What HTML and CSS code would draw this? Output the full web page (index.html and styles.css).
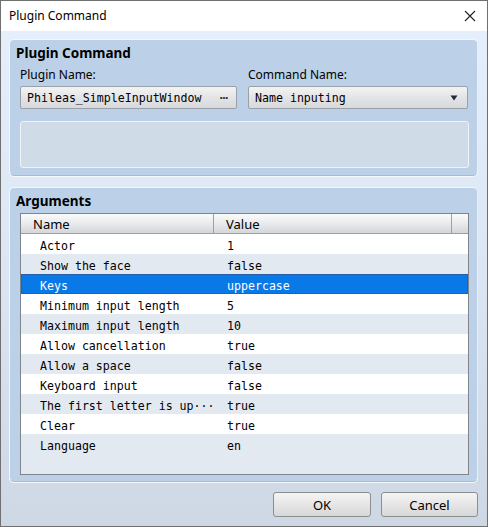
FILE: index.html
```html
<!DOCTYPE html>
<html lang="en">
<head>
<meta charset="utf-8">
<title>Plugin Command</title>
<link rel="stylesheet" href="styles.css">
</head>
<body>
<div class="window">
  <div class="titlebar">
    <span class="title">Plugin Command</span>
    <svg class="close" width="12" height="12" viewBox="0 0 12 12" aria-hidden="true">
      <path d="M1 1 L11 11 M11 1 L1 11" stroke="#222" stroke-width="1.1" fill="none"/>
    </svg>
  </div>
  <div class="body">
    <section class="group group-command">
      <h2 class="group-title">Plugin Command</h2>
      <div class="fields">
        <div class="field">
          <label class="label">Plugin Name:</label>
          <div class="control">
            <span class="mono">Phileas_SimpleInputWindow</span>
            <span class="dots">···</span>
          </div>
        </div>
        <div class="field">
          <label class="label">Command Name:</label>
          <div class="control">
            <span class="mono">Name inputing</span>
            <svg class="arrow" width="8" height="6" viewBox="0 0 8 6" aria-hidden="true">
              <path d="M0.5 0.5 H7.5 L4 5.5 Z" fill="#1f2a3a"/>
            </svg>
          </div>
        </div>
      </div>
      <div class="note"></div>
    </section>

    <section class="group group-args">
      <h2 class="group-title">Arguments</h2>
      <div class="table">
        <div class="thead">
          <div class="th th-name">Name</div>
          <div class="th th-value">Value</div>
          <div class="th th-pad"></div>
        </div>
        <div class="tbody">
          <div class="row"><span class="c-name">Actor</span><span class="c-value">1</span></div>
          <div class="row alt"><span class="c-name">Show the face</span><span class="c-value">false</span></div>
          <div class="row selected"><span class="c-name">Keys</span><span class="c-value">uppercase</span></div>
          <div class="row"><span class="c-name">Minimum input length</span><span class="c-value">5</span></div>
          <div class="row alt"><span class="c-name">Maximum input length</span><span class="c-value">10</span></div>
          <div class="row"><span class="c-name">Allow cancellation</span><span class="c-value">true</span></div>
          <div class="row alt"><span class="c-name">Allow a space</span><span class="c-value">false</span></div>
          <div class="row"><span class="c-name">Keyboard input</span><span class="c-value">false</span></div>
          <div class="row alt"><span class="c-name">The first letter is up···</span><span class="c-value">true</span></div>
          <div class="row"><span class="c-name">Clear</span><span class="c-value">true</span></div>
          <div class="row alt"><span class="c-name">Language</span><span class="c-value">en</span></div>
        </div>
      </div>
    </section>

    <div class="footer">
      <button class="btn btn-ok">OK</button>
      <button class="btn btn-cancel">Cancel</button>
    </div>
  </div>
</div>
</body>
</html>
```
FILE: styles.css
```css
html, body {
  margin: 0;
  padding: 0;
}

body {
  width: 488px;
  height: 527px;
  font-family: "Noto Sans", "Open Sans", sans-serif;
  color: #000;
  background: #fff;
}

.window {
  box-sizing: border-box;
  width: 488px;
  height: 527px;
  border: 1px solid #707070;
  display: flex;
  flex-direction: column;
}

/* title bar */
.titlebar {
  height: 30px;
  flex: none;
  background: #fff;
  display: flex;
  align-items: center;
  justify-content: space-between;
  padding: 0 11px 0 8px;
}

.title {
  font-size: 12px;
  line-height: 16px;
}

.close {
  display: block;
  margin-top: -1px;
}

/* dialog body */
.body {
  flex: 1;
  background: linear-gradient(#e4effb 0%, #dce7f3 45%, #cdd8e4 100%);
  padding: 8px 9px 0 8px;
  display: flex;
  flex-direction: column;
}

.group {
  box-sizing: border-box;
  background: #bcd1e7;
  border: 1px solid #f3f7fc;
  border-right-color: #e8eff8;
  border-bottom-color: #a8bbd0;
  border-radius: 5px;
  box-shadow: 0 1px 0 #f5f9fd;
  padding: 5px 8px 7px 10px;
}

.group-title {
  margin: 0 0 0 -4px;
  font-size: 13.5px;
  line-height: 16px;
  font-weight: 700;
  color: #000;
}

.group-command {
  height: 137px;
}

.group-args {
  height: 295px;
  margin-top: 11px;
}

/* plugin / command fields */
.fields {
  display: flex;
  gap: 11px;
  margin-top: 6px;
}

.field {
  display: flex;
  flex-direction: column;
}

.field:first-child {
  width: 217px;
}

.field:last-child {
  width: 220px;
}

.label {
  font-size: 12px;
  line-height: 16px;
  margin-bottom: 3px;
}

.control {
  box-sizing: border-box;
  height: 23px;
  border: 1px solid #9aa0a8;
  border-radius: 2px;
  background: linear-gradient(#f3f3f3, #e2e3e5 55%, #d7d9dc);
  display: flex;
  align-items: center;
  justify-content: space-between;
  padding: 0 10px 0 6px;
}

.mono {
  font-family: "DejaVu Sans Mono", "Liberation Mono", monospace;
  font-size: 11.6px;
  line-height: 16px;
  white-space: pre;
}

.dots {
  font-size: 12px;
  font-weight: 700;
  letter-spacing: -0.5px;
  color: #222;
  margin-right: -2px;
}

.arrow {
  display: block;
  margin-right: -1px;
}

.note {
  box-sizing: border-box;
  height: 47px;
  margin-top: 12px;
  background: #cfdbe7;
  border: 1px solid #eef3f9;
  border-radius: 3px;
}

/* arguments table */
.table {
  box-sizing: border-box;
  height: 262px;
  margin-top: 4px;
  border: 1px solid #7f848c;
  background: #e3e9f0;
  display: flex;
  flex-direction: column;
}

.thead {
  flex: none;
  display: flex;
  height: 19px;
  border-bottom: 1px solid #9aa0a8;
  background: linear-gradient(#fbfbfb, #e9eaec 50%, #d3d6da);
}

.th {
  box-sizing: border-box;
  font-size: 13px;
  line-height: 20px;
  border-right: 1px solid #9aa0a8;
}

.th-name {
  width: 193px;
  padding-left: 12px;
}

.th-value {
  width: 238px;
  padding-left: 12px;
}

.th-pad {
  flex: 1;
  border-right: none;
}

.tbody {
  flex: 1;
}

.row {
  box-sizing: border-box;
  height: 20px;
  display: flex;
  align-items: center;
  padding-top: 4px;
  background: #fff;
  font-family: "DejaVu Sans Mono", "Liberation Mono", monospace;
  font-size: 11.6px;
  line-height: 16px;
  white-space: pre;
}

.row.alt {
  background: #e3e9f0;
}

.row.selected {
  background: #0a79e8;
  border: 1px solid #2b60a8;
  color: #fff;
}

.c-name {
  box-sizing: border-box;
  width: 193px;
  padding-left: 19px;
}

.row.selected .c-name {
  padding-left: 18px;
  width: 192px;
}

.c-value {
  padding-left: 13px;
}

/* dialog buttons */
.footer {
  display: flex;
  justify-content: flex-end;
  gap: 10px;
  margin-top: 10px;
}

.btn {
  box-sizing: border-box;
  height: 25px;
  border: 1px solid #8d8e90;
  border-radius: 3px;
  background: linear-gradient(#f4f4f4, #e6e6e6 50%, #d6d7d9);
  font-family: "Noto Sans", "Open Sans", sans-serif;
  font-size: 13px;
  line-height: 16px;
  color: #000;
  padding: 0;
}

.btn-ok {
  width: 98px;
}

.btn-cancel {
  width: 97px;
}
```
